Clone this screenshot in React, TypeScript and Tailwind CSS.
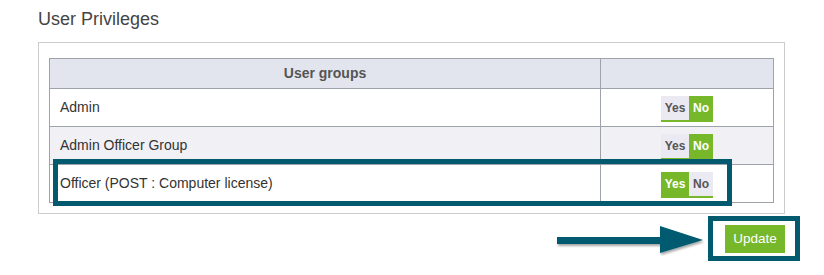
const rows = [
  { name: 'Admin', yes: false },
  { name: 'Admin Officer Group', yes: false },
  { name: 'Officer (POST : Computer license)', yes: true },
];

function Toggle({ yes }: { yes: boolean }) {
  return (
    <div className="inline-flex h-[26px] border-b-2 border-[#77b82a] text-[12px] font-bold leading-[24px]">
      <span className={`w-[28px] text-center ${yes ? 'bg-[#77b82a] text-white' : 'bg-[#ebe9f2] text-[#555]'}`}>Yes</span>
      <span className={`w-[24px] text-center ${yes ? 'bg-[#ebe9f2] text-[#555]' : 'bg-[#77b82a] text-white'}`}>No</span>
    </div>
  );
}

export default function App() {
  return (
    <div className="relative w-[824px] h-[275px] bg-white font-['Liberation_Sans',Arial,sans-serif] text-[#333]">
      <div className="pl-[38px] pt-[7px]">
        <h2 className="h-[25px] text-[18px] leading-[25px] text-[#444] mb-[10px]">User Privileges</h2>
        {/* Privileges box */}
        <div className="w-[747px] border border-[#ccc] px-[10px] pt-[15px] pb-[10px]">
          <table className="w-[725px] border-collapse text-[14px]">
            <thead>
              <tr className="h-[30px] bg-[#e2e5ed]">
                <th className="w-[551px] border border-[#9ea3ab] font-bold text-[#555]">User groups</th>
                <th className="border border-[#9ea3ab]" />
              </tr>
            </thead>
            <tbody>
              {rows.map((r, i) => (
                <tr key={r.name} className={`h-[38px] ${i === 1 ? 'bg-[#f0f0f5]' : 'bg-white'}`}>
                  <td className="border border-[#9ea3ab] pl-[10px]">{r.name}</td>
                  <td className="border border-[#9ea3ab] text-center align-middle pt-[2px]">
                    <Toggle yes={r.yes} />
                  </td>
                </tr>
              ))}
            </tbody>
          </table>
        </div>
      </div>

      {/* Update row with arrow */}
      <div className="flex items-center justify-end pr-[24px] mt-[2px]">
        <svg width="152" height="45" viewBox="0 0 152 45" className="mr-[1px]">
          <defs>
            <filter id="sh" x="-10%" y="-30%" width="130%" height="170%">
              <feDropShadow dx="1" dy="2" stdDeviation="1.2" floodColor="#000" floodOpacity="0.35" />
            </filter>
          </defs>
          <g filter="url(#sh)" fill="#035a6f">
            <rect x="2" y="21" width="106" height="7" />
            <polygon points="105,10 148,24 105,37" />
          </g>
        </svg>
        <div className="border-[5px] border-[#035a6f] pl-[12px] pr-[10px] pt-[4px] pb-[3px]">
          <button className="w-[60px] h-[28px] bg-[#77b82a] text-white text-[13.5px]">Update</button>
        </div>
      </div>

      {/* Highlight around officer row */}
      <div className="absolute left-[53px] top-[159px] w-[679px] h-[47px] border-[5px] border-[#035a6f]" />
    </div>
  );
}
